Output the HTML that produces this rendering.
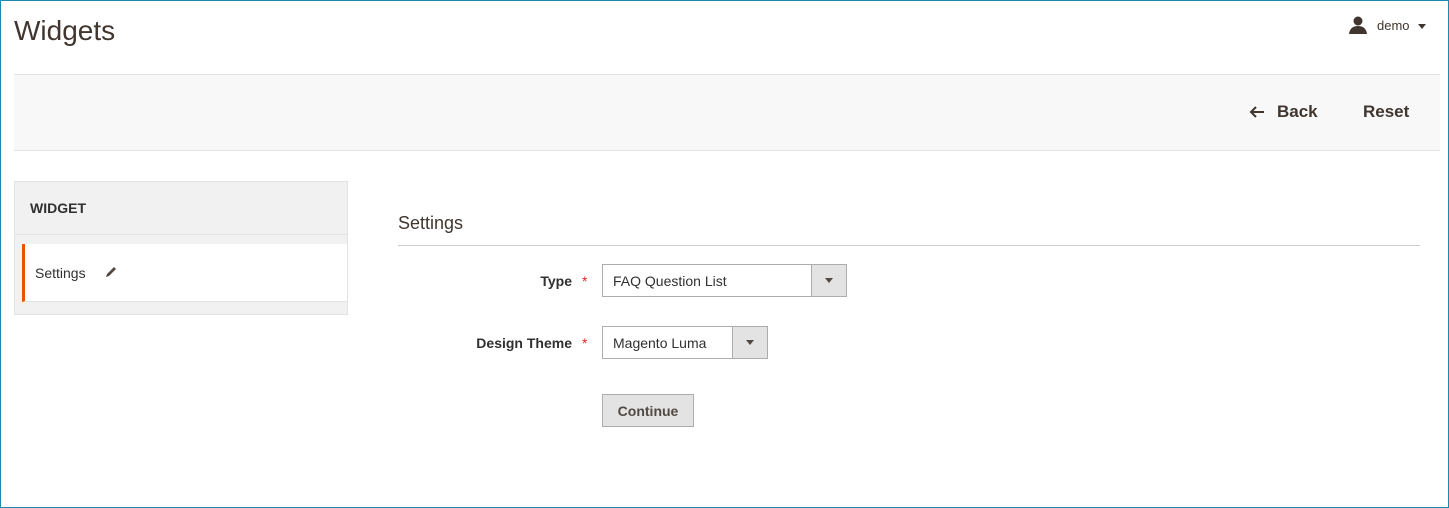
<!DOCTYPE html>
<html><head><style>
*{box-sizing:border-box;margin:0;padding:0}
body{width:1449px;height:508px;overflow:hidden;background:#fff;font-family:"Liberation Sans",sans-serif;color:#303030;position:relative}
.frame{position:absolute;left:0;top:0;width:1449px;height:508px;border:1px solid #1a8ab0}
.a{position:absolute}
.title{left:14px;top:15px;font-size:28px;color:#41362f}
.bar{left:14px;top:74px;width:1426px;height:77px;background:#f8f8f8;border-top:1px solid #e3e3e3;border-bottom:1px solid #e3e3e3}
.btn{font-size:17px;font-weight:bold;color:#41362f}
.side{left:14px;top:181px;width:334px;height:134px;background:#f1f1f1;border:1px solid #e3e3e3}
.sel{border:1px solid #adadad;background:#fff;height:33px;font-size:14px;padding:8px 0 0 10px;color:#303030}
.arr{position:absolute;right:0;top:0;width:35px;height:31px;background:#e3e3e3;border-left:1px solid #adadad}
.arr:after{content:"";position:absolute;left:13px;top:13px;border-left:4px solid transparent;border-right:4px solid transparent;border-top:5px solid #514943}
.lbl{font-size:14px;font-weight:bold;text-align:right;width:200px;color:#303030}
.star{color:#e22626;font-size:14px}
</style></head><body>
<div class="frame"></div>
<div class="a title">Widgets</div>
<svg class="a" style="left:1348px;top:16px" width="20" height="18" viewBox="0 0 20 18"><circle cx="10" cy="5" r="4.5" fill="#41362f"/><path d="M1 18 Q2 10 10 10 Q18 10 19 18Z" fill="#41362f"/></svg>
<div class="a" style="left:1377px;top:18px;font-size:13px;color:#41362f">demo</div>
<div class="a" style="left:1418px;top:24px;border-left:4px solid transparent;border-right:4px solid transparent;border-top:5px solid #41362f"></div>
<div class="a bar"></div>
<svg class="a" style="left:1249px;top:105px" width="16" height="14" viewBox="0 0 16 14"><path d="M15 7 H2 M7 2 L2 7 L7 12" fill="none" stroke="#41362f" stroke-width="2"/></svg>
<div class="a btn" style="left:1277px;top:102px">Back</div>
<div class="a btn" style="left:1363px;top:102px">Reset</div>
<div class="a side"></div>
<div class="a" style="left:30px;top:200px;font-size:14px;font-weight:bold;color:#303030">WIDGET</div>
<div class="a" style="left:15px;top:234px;width:332px;height:1px;background:#e3e3e3"></div>
<div class="a" style="left:22px;top:244px;width:325px;height:58px;background:#fff;border-left:3px solid #eb5202;border-bottom:1px solid #e3e3e3"></div>
<div class="a" style="left:35px;top:265px;font-size:14px;color:#303030">Settings</div>
<svg class="a" style="left:105px;top:265px" width="13" height="13" viewBox="0 0 13 13"><path d="M1 12 L2 9 L9 2 L11 4 L4 11Z" fill="#514943"/></svg>
<div class="a" style="left:398px;top:213px;font-size:18px;color:#41362f">Settings</div>
<div class="a" style="left:398px;top:245px;width:1022px;height:1px;background:#cccccc"></div>
<div class="a lbl" style="left:372px;top:273px">Type</div>
<div class="a star" style="left:582px;top:273px">*</div>
<div class="a sel" style="left:602px;top:264px;width:245px">FAQ Question List<div class="arr"></div></div>
<div class="a lbl" style="left:372px;top:335px">Design Theme</div>
<div class="a star" style="left:582px;top:335px">*</div>
<div class="a sel" style="left:602px;top:326px;width:166px">Magento Luma<div class="arr"></div></div>
<div class="a" style="left:602px;top:394px;width:92px;height:33px;background:#e3e3e3;border:1px solid #adadad;font-size:14px;font-weight:bold;color:#514943;text-align:center;padding-top:8px">Continue</div>
</body></html>
